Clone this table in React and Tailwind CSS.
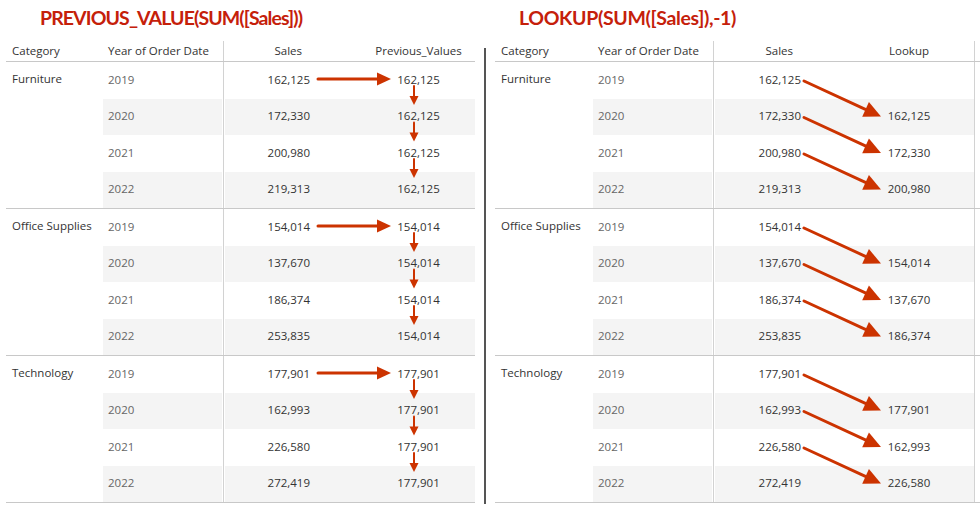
import React from "react";

const groups = [
  { name: "Furniture", rows: [["2019", "162,125"], ["2020", "172,330"], ["2021", "200,980"], ["2022", "219,313"]] },
  { name: "Office Supplies", rows: [["2019", "154,014"], ["2020", "137,670"], ["2021", "186,374"], ["2022", "253,835"]] },
  { name: "Technology", rows: [["2019", "177,901"], ["2020", "162,993"], ["2021", "226,580"], ["2022", "272,419"]] },
];

const RED = "#cc3300";

function Arrow({ x1, y1, x2, y2, hl, hw, sw }) {
  const dx = x2 - x1;
  const dy = y2 - y1;
  const len = Math.sqrt(dx * dx + dy * dy);
  const ux = dx / len;
  const uy = dy / len;
  const bx = x2 - ux * hl;
  const by = y2 - uy * hl;
  const px = -uy;
  const py = ux;
  const pts = `${x2},${y2} ${bx + px * hw},${by + py * hw} ${bx - px * hw},${by - py * hw}`;
  return (
    <g>
      <line x1={x1} y1={y1} x2={bx + ux * 1} y2={by + uy * 1} stroke={RED} strokeWidth={sw} strokeLinecap="round" />
      <polygon points={pts} fill={RED} />
    </g>
  );
}

function Table({ catW, yearW, salesW, measW, salesPr, salesHdrPr, measPl, measLabel, kind, rightBorder }) {
  return (
    <div className="flex flex-col">
      <div className="flex h-[20px] items-center text-[11.5px] text-[#333]">
        <div className={`${catW} pl-[6px]`}>Category</div>
        <div className={`${yearW} pl-[5px]`}>Year of Order Date</div>
        <div className="w-[3px] h-full flex justify-center"><div className="w-px h-full bg-[#d2d2d2]" /></div>
        <div className={`${salesW} text-right ${salesHdrPr}`}>Sales</div>
        <div className={`${measW} ${measPl} h-full flex items-center justify-center ${rightBorder ? "border-r border-[#d2d2d2]" : ""}`}>{measLabel}</div>
      </div>
      <div className="h-px bg-[#c8c8c8]" />
      {groups.map((g, gi) => (
        <div key={gi} className="flex flex-col">
          <div className="flex">
            <div className={`${catW} shrink-0 pl-[6px] pt-[8px] text-[11.5px] text-[#333] whitespace-nowrap`}>{g.name}</div>
            <div className="flex flex-col">
              {g.rows.map((r, ri) => {
                const shade = ri % 2 === 1 ? "bg-[#f4f4f4]" : "bg-white";
                let mv = "";
                if (kind === "prev") mv = g.rows[0][1];
                else mv = ri === 0 ? "" : g.rows[ri - 1][1];
                return (
                  <div key={ri} className="flex h-[36.5px] text-[11.5px]">
                    <div className={`${yearW} pl-[5px] pb-[2px] h-full flex items-center text-[#666] ${shade}`}>{r[0]}</div>
                    <div className="w-[3px] h-full flex justify-center bg-white"><div className="w-px h-full bg-[#d2d2d2]" /></div>
                    <div className={`${salesW} h-full pb-[2px] flex items-center justify-end ${salesPr} text-[#333] ${shade}`}>{r[1]}</div>
                    <div className={`${measW} h-full pb-[2px] flex items-center justify-center ${measPl} text-[#333] ${shade} ${rightBorder ? "border-r border-[#d2d2d2]" : ""}`}>{mv}</div>
                  </div>
                );
              })}
            </div>
          </div>
          <div className="h-px bg-[#c8c8c8]" />
        </div>
      ))}
    </div>
  );
}

export default function App() {
  const font = { fontFamily: "'Open Sans', Lato, sans-serif" };
  const centers = [];
  for (let g = 0; g < 3; g++) {
    const row = [];
    for (let r = 0; r < 4; r++) row.push(62 + g * 147 + r * 36.5 + 17);
    centers.push(row);
  }
  return (
    <div className="relative w-[980px] h-[507px] bg-white overflow-hidden" style={font}>
      <div className="flex h-full">
        {/* left panel */}
        <div className="w-[490px] shrink-0 flex flex-col">
          <div className="h-[41px] pl-[40px] pt-[6px] text-[19.5px] font-bold tracking-[-0.9px] text-[#c5200a] leading-[24px]" style={{ fontFamily: "Lato, sans-serif" }}>
            PREVIOUS_VALUE(SUM([Sales]))
          </div>
          <div className="flex">
            <div className="pl-[6px]">
              <Table
                catW="w-[97px]"
                yearW="w-[119px]"
                salesW="w-[129px]"
                measW="w-[121px]"
                salesPr="pr-[44px]"
                salesHdrPr="pr-[52px]"
                measPl="pl-[8px]"
                measLabel="Previous_Values"
                kind="prev"
                rightBorder={false}
              />
            </div>
            <div className="ml-[9px] mt-[7px] w-[2px] h-[456px] bg-[#555]" />
          </div>
        </div>
        {/* right panel */}
        <div className="w-[490px] shrink-0 flex flex-col">
          <div className="h-[41px] pl-[29px] pt-[6px] text-[19.5px] font-bold tracking-[-0.35px] text-[#c5200a] leading-[24px]" style={{ fontFamily: "Lato, sans-serif" }}>
            LOOKUP(SUM([Sales]),-1)
          </div>
          <div className="pl-[5px]">
            <Table
              catW="w-[98px]"
              yearW="w-[119px]"
              salesW="w-[129px]"
              measW="w-[131px]"
              salesPr="pr-[43px]"
              salesHdrPr="pr-[51px]"
              measPl="pl-0"
              measLabel="Lookup"
              kind="lookup"
              rightBorder={true}
            />
          </div>
        </div>
      </div>
      <svg className="absolute inset-0 pointer-events-none" width="980" height="507" viewBox="0 0 980 507">
        {centers.map((row, g) => (
          <g key={"l" + g}>
            <Arrow x1={318} y1={row[0]} x2={391} y2={row[0]} hl={14} hw={6.5} sw={3} />
            {[0, 1, 2].map((r) => (
              <Arrow key={r} x1={414} y1={row[r] + 7} x2={414} y2={row[r] + 26} hl={9} hw={4.5} sw={2} />
            ))}
          </g>
        ))}
        {centers.map((row, g) => (
          <g key={"r" + g}>
            {[0, 1, 2].map((r) => (
              <Arrow key={r} x1={804} y1={row[r] + 2} x2={881} y2={row[r + 1] + 1} hl={17} hw={8} sw={3} />
            ))}
          </g>
        ))}
      </svg>
    </div>
  );
}
